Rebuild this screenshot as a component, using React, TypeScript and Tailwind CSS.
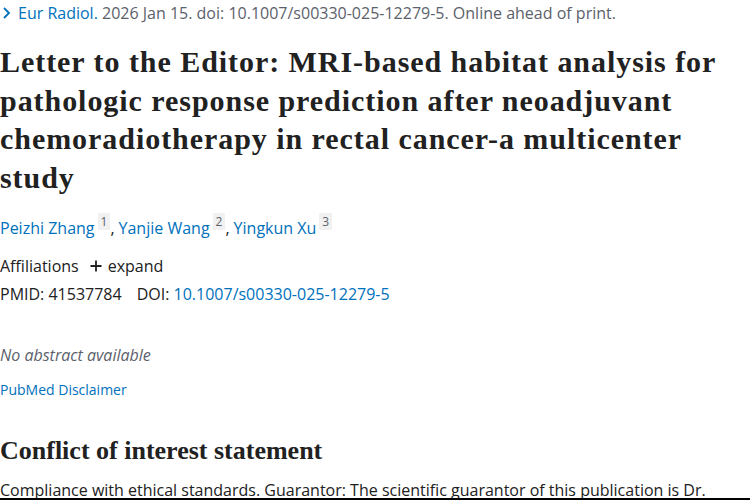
import React from "react";

const sans = "font-['Segoe_UI','Open_Sans','Noto_Sans',sans-serif]";
const serif = "font-['Liberation_Serif','DejaVu_Serif',serif]";

const authors = [
  { name: "Peizhi Zhang", sup: "1" },
  { name: "Yanjie Wang", sup: "2" },
  { name: "Yingkun Xu", sup: "3" },
];

export default function App() {
  return (
    <div className={`h-[500px] overflow-hidden bg-white text-[#212121] border-b-2 border-black ${sans}`}>
      {/* citation */}
      <div className="flex items-center h-[26px] text-[16px] text-[#5b616b]">
        <svg width="18" height="26" viewBox="0 0 18 26" className="shrink-0">
          <path d="M4 8 L9 13 L4 18" fill="none" stroke="#0071bc" strokeWidth="1.8" />
        </svg>
        <span className="text-[#0071bc]">Eur Radiol.</span>
        <span>&nbsp;2026 Jan 15. doi: 10.1007/s00330-025-12279-5. Online ahead of print.</span>
      </div>

      {/* title */}
      <h1 className={`${serif} font-bold text-[30px] leading-[38.5px] tracking-[0.95px] mt-[17px] pr-[10px]`}>
        Letter to the Editor: MRI-based habitat analysis for pathologic response prediction after neoadjuvant
        chemoradiotherapy in rectal cancer-a multicenter study
      </h1>

      {/* authors */}
      <div className="mt-[20px] text-[16px] leading-[22px] flex items-center">
        {authors.map((a, i) => (
          <span key={i} className="flex items-start">
            <span className="text-[#0071bc]">{a.name}</span>
            <span className="ml-[3px] -mt-[4px] px-[3px] bg-[#f1f1f1] text-[12px] leading-[17px] text-[#5b616b]">{a.sup}</span>
            {i < authors.length - 1 && <span className="mr-[4px]">,</span>}
          </span>
        ))}
      </div>

      {/* affiliations */}
      <div className="mt-[16px] text-[16px] leading-[22px] flex items-center">
        <span>Affiliations</span>
        <svg width="14" height="14" viewBox="0 0 14 14" className="ml-[10px] mr-[5px]">
          <path d="M7 1.5 V12.5 M1.5 7 H12.5" stroke="#212121" strokeWidth="1.8" />
        </svg>
        <span>expand</span>
      </div>

      {/* ids */}
      <div className="mt-[6px] text-[16px] leading-[22px] flex">
        <span>PMID: 41537784</span>
        <span className="ml-[15px]">DOI:&nbsp;</span>
        <span className="text-[#0071bc]">10.1007/s00330-025-12279-5</span>
      </div>

      <div className="mt-[39px] text-[16px] leading-[22px] italic text-[#5b616b]">No abstract available</div>

      <div className="mt-[13px] text-[14px] leading-[22px] text-[#0071bc]">PubMed Disclaimer</div>

      <h2 className={`${serif} font-bold text-[26px] leading-[32px] mt-[34px]`}>
        Conflict of interest statement
      </h2>

      <p className="mt-[10px] text-[16px] leading-[26px]">
        Compliance with ethical standards. Guarantor: The scientific guarantor of this publication is Dr.
        Yingkun Xu.
      </p>
    </div>
  );
}
